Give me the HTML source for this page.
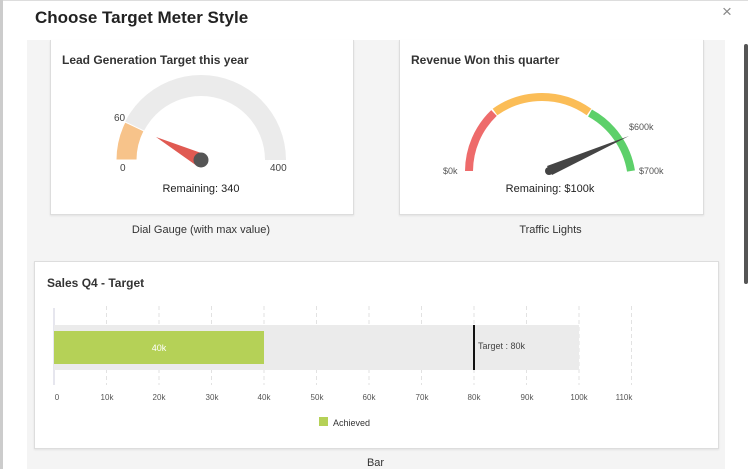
<!DOCTYPE html><html><head><style>
body{margin:0;width:750px;height:469px;overflow:hidden;background:#fff;font-family:"Liberation Sans",sans-serif;position:relative;color:#333}
.a{position:absolute}
.card{position:absolute;background:#fff;border:1px solid #ddd;box-shadow:0 1px 2px rgba(0,0,0,.08)}
.t{font-size:12px;font-weight:bold;color:#333}
.lbl{position:absolute;font-size:11px;color:#333;text-align:center}
</style></head><body>
<div class="a" style="left:0;top:0;width:3px;height:469px;background:#ccc"></div>
<div class="a" style="left:3px;top:0;width:745px;height:1px;background:#ddd"></div>
<div class="a" style="left:35px;top:8px;font-size:17px;font-weight:bold;color:#222">Choose Target Meter Style</div>
<div class="a" style="left:722px;top:2px;font-size:17px;color:#888">×</div>
<div class="a" style="left:27px;top:40px;width:698px;height:429px;background:#f4f4f4"></div>
<div class="a" style="left:744px;top:44px;width:4px;height:240px;background:#555;border-radius:2px"></div>

<div class="card" style="left:50px;top:40px;width:302px;height:174px;border-top:none"></div>
<div class="a t" style="left:62px;top:53px">Lead Generation Target this year</div>
<svg class="a" style="left:50px;top:40px" width="302" height="174">
<path d="M66 120 A85 85 0 0 1 236 120 L215 120 A64 64 0 0 0 87 120Z" fill="#ebebeb"/>
<path d="M66 120 A85 85 0 0 1 75 82 L94 91 A64 64 0 0 0 87 120Z" fill="#f7c38a" stroke="#fff" stroke-width="1"/>
<path d="M106 97 L154 114 L147 126Z" fill="#e05a52"/>
<circle cx="151" cy="120" r="7.5" fill="#555"/>
<text x="64" y="81" font-size="10" fill="#444">60</text>
<text x="70" y="131" font-size="10" fill="#444">0</text>
<text x="220" y="131" font-size="10" fill="#444">400</text>
<text x="151" y="152" font-size="11" fill="#222" text-anchor="middle">Remaining: 340</text>
</svg>
<div class="lbl" style="left:50px;width:302px;top:224px">Dial Gauge (with max value)</div>

<div class="card" style="left:399px;top:40px;width:303px;height:174px;border-top:none"></div>
<div class="a t" style="left:411px;top:53px">Revenue Won this quarter</div>
<svg class="a" style="left:399px;top:40px" width="303" height="174">
<g fill="none" stroke-width="8">
<path d="M70 131 A81 81 0 0 1 95 73" stroke="#ee6b6b"/>
<path d="M96 72 A81 81 0 0 1 190 72" stroke="#fbbd57"/>
<path d="M191 73 A81 81 0 0 1 232 131" stroke="#5dd06a"/>
</g>
<path d="M148 126 L230 96 L153 135Z" fill="#444"/>
<circle cx="150" cy="131" r="4" fill="#444"/>
<text x="44" y="134" font-size="9" fill="#555">$0k</text>
<text x="230" y="90" font-size="9" fill="#555">$600k</text>
<text x="240" y="134" font-size="9" fill="#555">$700k</text>
<text x="151" y="152" font-size="11" fill="#222" text-anchor="middle">Remaining: $100k</text>
</svg>
<div class="lbl" style="left:399px;width:303px;top:224px">Traffic Lights</div>

<div class="card" style="left:34px;top:261px;width:683px;height:186px"></div>
<div class="a t" style="left:47px;top:276px">Sales Q4 - Target</div>
<svg class="a" style="left:34px;top:300px" width="683" height="140">
<g stroke="#e2e2e2" stroke-dasharray="4,3">
<line x1="72.5" y1="6" x2="72.5" y2="85"/><line x1="125" y1="6" x2="125" y2="85"/><line x1="177.5" y1="6" x2="177.5" y2="85"/><line x1="230" y1="6" x2="230" y2="85"/><line x1="282.5" y1="6" x2="282.5" y2="85"/><line x1="335" y1="6" x2="335" y2="85"/><line x1="387.5" y1="6" x2="387.5" y2="85"/><line x1="440" y1="6" x2="440" y2="85"/><line x1="492.5" y1="6" x2="492.5" y2="85"/><line x1="545" y1="6" x2="545" y2="85"/><line x1="597.5" y1="6" x2="597.5" y2="85"/>
</g>
<line x1="20" y1="8" x2="20" y2="85" stroke="#ccd"/>
<rect x="20" y="25" width="525" height="45" fill="#ebebeb"/>
<rect x="20" y="31" width="210" height="33" fill="#b5d157"/>
<text x="125" y="51" font-size="9" fill="#fff" text-anchor="middle">40k</text>
<line x1="440" y1="25" x2="440" y2="70" stroke="#111" stroke-width="2"/>
<text x="444" y="49" font-size="9" fill="#444">Target : 80k</text>
<g font-size="8" fill="#555" text-anchor="middle">
<text x="23" y="100">0</text><text x="73" y="100">10k</text><text x="125" y="100">20k</text><text x="178" y="100">30k</text><text x="230" y="100">40k</text><text x="283" y="100">50k</text><text x="335" y="100">60k</text><text x="388" y="100">70k</text><text x="440" y="100">80k</text><text x="493" y="100">90k</text><text x="545" y="100">100k</text><text x="590" y="100">110k</text>
</g>
<rect x="285" y="117" width="9" height="9" fill="#b5d157"/>
<text x="299" y="126" font-size="9" fill="#333">Achieved</text>
</svg>
<div class="lbl" style="left:34px;width:683px;top:457px">Bar</div>
</body></html>
